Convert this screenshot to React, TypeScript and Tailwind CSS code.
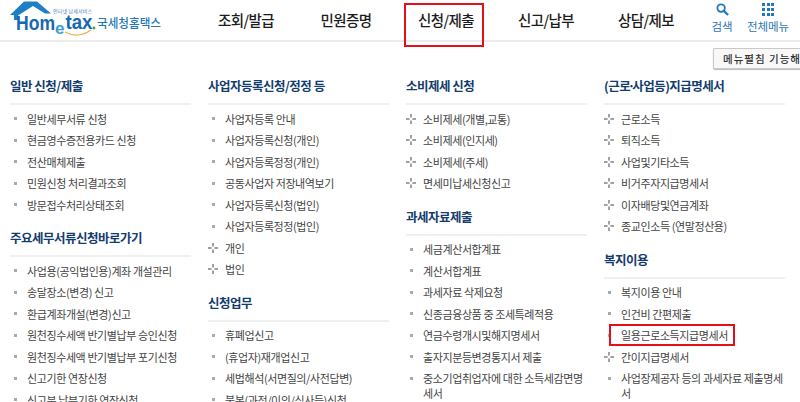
import type { ReactNode } from 'react';

const FONT = "font-['Noto_Sans_CJK_KR','Liberation_Sans',sans-serif]";

type Item = { t: string; plus?: boolean; boxed?: boolean };
type Section = { title: ReactNode; items: Item[] };

const p = (t: string): Item => ({ t, plus: true });
const b = (t: string): Item => ({ t });

const COLUMNS: Section[][] = [
  [
    { title: '일반 신청/제출', items: ['일반세무서류 신청', '현금영수증전용카드 신청', '전산매체제출', '민원신청 처리결과조회', '방문접수처리상태조회'].map(b) },
    { title: '주요세무서류신청바로가기', items: ['사업용(공익법인용)계좌 개설관리', '송달장소(변경) 신고', '환급계좌개설(변경)신고', '원천징수세액 반기별납부 승인신청', '원천징수세액 반기별납부 포기신청', '신고기한 연장신청', '신고분 납부기한 연장신청'].map(b) },
  ],
  [
    { title: '사업자등록신청/정정 등', items: [b('사업자등록 안내'), b('사업자등록신청(개인)'), b('사업자등록정정(개인)'), b('공동사업자 저장내역보기'), b('사업자등록신청(법인)'), b('사업자등록정정(법인)'), p('개인'), p('법인')] },
    { title: '신청업무', items: ['휴폐업신고', '(휴업자)재개업신고', '세법해석(서면질의/사전답변)', '불복(과정/이의/심사등)신청'].map(b) },
  ],
  [
    { title: '소비제세 신청', items: ['소비제세(개별,교통)', '소비제세(인지세)', '소비제세(주세)', '면세미납세신청신고'].map(p) },
    { title: '과세자료제출', items: ['세금계산서합계표', '계산서합계표', '과세자료 삭제요청', '신종금융상품 중 조세특례적용', '연금수령개시및해지명세서', '출자지분등변경통지서 제출', '중소기업취업자에 대한 소득세감면명세서'].map(b) },
  ],
  [
    { title: <>(근로<span className="-mx-[2.5px]">·</span>사업등)지급명세서</>, items: ['근로소득', '퇴직소득', '사업및기타소득', '비거주자지급명세서', '이자배당및연금계좌', '종교인소득 (연말정산용)'].map(p) },
    { title: '복지이용', items: [b('복지이용 안내'), b('인건비 간편제출'), { t: '일용근로소득지급명세서', boxed: true }, p('간이지급명세서'), b('사업장제공자 등의 과세자료 제출명세서')] },
  ],
];

const NAV = ['조회/발급', '민원증명', '신청/제출', '신고/납부', '상담/제보'];

function PlusMark() {
  return (
    <svg width="10" height="10" viewBox="0 0 10 10" className="block">
      <path d="M5 0V3.6M5 6.4V10M0 5H3.6M6.4 5H10" stroke="#a0a0a0" strokeWidth="2" fill="none" />
    </svg>
  );
}

function Logo() {
  return (
    <svg width="170" height="38" viewBox="0 0 170 38" className="block">
      <path d="M10 15L24 1.5H37L51 13.5H45L33 6L18 15.5V20H14V15Z" fill="#1f7fc4" />
      <text x="53" y="12.5" fontSize="5" fill="#4a7fb5" fontFamily="Noto Sans CJK KR" textLength="39">인터넷 납세서비스</text>
      <text x="16" y="30" fontSize="20" fontWeight="700" fill="#1769b0" fontFamily="Liberation Sans" textLength="39" lengthAdjust="spacingAndGlyphs">Hom</text>
      <text x="55" y="33.5" fontSize="17" fontWeight="700" fill="#3d9bd8" fontFamily="Liberation Sans">e</text>
      <text x="65.5" y="29" fontSize="20" fontWeight="700" fill="#1769b0" fontFamily="Liberation Sans" textLength="27" lengthAdjust="spacingAndGlyphs">tax</text>
      <circle cx="94" cy="28" r="1.4" fill="#3aa53a" />
      <path d="M65 32Q78 39 91 30" stroke="#eeb04a" strokeWidth="1.3" fill="none" />
      <text x="97" y="28" fontSize="12" fontWeight="500" fill="#2277b8" fontFamily="Noto Sans CJK KR" textLength="64" lengthAdjust="spacingAndGlyphs">국세청홈택스</text>
    </svg>
  );
}

function Header() {
  return (
    <header className="h-[42px] border-b-2 border-[#ececec] flex items-start shrink-0">
      <div className="w-[196px] shrink-0">
        <Logo />
      </div>
      <nav className="flex w-[500px] shrink-0">
        {NAV.map((n, i) => (
          <a key={n} className="relative w-[100px] h-[40px] flex items-center justify-center text-[14.5px] font-medium text-[#1c1c1c] tracking-[-0.6px]">
            {n}
            {i === 2 && <span className="absolute left-[8px] top-[3px] w-[80px] h-[44px] border-2 border-[#e3101c]" />}
          </a>
        ))}
      </nav>
      <div className="flex pl-[16px] gap-[16px] text-[#2c78b4] text-[11.5px] tracking-[-0.1px]">
        <div className="flex flex-col items-center w-[20px]">
          <svg width="13" height="13" viewBox="0 0 14 14" className="mt-[3px]">
            <circle cx="5.5" cy="5.5" r="4" stroke="#2378b5" strokeWidth="2" fill="none" />
            <path d="M8.5 8.5L13 13" stroke="#2378b5" strokeWidth="2.4" />
          </svg>
          <span className="mt-[3px] leading-[15px] whitespace-nowrap">검색</span>
        </div>
        <div className="flex flex-col items-center w-[40px]">
          <div className="grid grid-cols-3 gap-[1.5px] mt-[3px] h-[13px]">
            {Array.from({ length: 9 }).map((_, i) => (
              <span key={i} className="w-[3px] h-[3px] bg-[#2378b5]" />
            ))}
          </div>
          <span className="mt-[3px] leading-[15px] whitespace-nowrap">전체메뉴</span>
        </div>
      </div>
    </header>
  );
}

function MenuRow({ item }: { item: Item }) {
  return (
    <li className="relative flex min-h-[21.5px] items-start text-[11px] leading-[14.5px] py-[3.5px] text-[#444] tracking-[-0.4px]">
      <span className="w-[17px] h-[14.5px] shrink-0 flex items-center">
        {item.plus ? (
          <PlusMark />
        ) : (
          <span className="block ml-[4px] w-[3px] h-[3px] bg-[#aaa]" />
        )}
      </span>
      <span className="break-all">{item.t}</span>
      {item.boxed && <span className="absolute left-[5px] -top-[0.5px] w-[126px] h-[22px] border-2 border-[#e3101c]" />}
    </li>
  );
}

function MenuSection({ section }: { section: Section }) {
  return (
    <section className="mb-[12.5px]">
      <h3 className="h-[29px] border-b-2 border-[#f0f0f0] text-[12.5px] font-bold leading-[20px] text-[#143c6e] tracking-[-0.5px] whitespace-nowrap">
        {section.title}
      </h3>
      <ul className="pt-[3px]">
        {section.items.map((it) => (
          <MenuRow key={it.t} item={it} />
        ))}
      </ul>
    </section>
  );
}

export default function App() {
  return (
    <div className={`w-[800px] h-[402px] overflow-hidden bg-white flex flex-col ${FONT}`}>
      <Header />
      <div className="flex justify-end h-[34px] pt-[6px] shrink-0">
        <button className="w-[87px] h-[21px] pl-[9px] border border-[#c9c9c9] rounded-l-[2px] border-r-0 bg-[#f8f8f8] shadow-[0_1px_1px_#bbb] text-left text-[10.5px] font-medium text-[#333] tracking-[1px] whitespace-nowrap overflow-hidden">
          메뉴펼침 기능해제
        </button>
      </div>
      <div className="grid grid-cols-[181px_181px_181px_181px] gap-x-[17px] pl-[10px]">
        {COLUMNS.map((col, i) => (
          <div key={i}>
            {col.map((s, j) => (
              <MenuSection key={j} section={s} />
            ))}
          </div>
        ))}
      </div>
    </div>
  );
}
